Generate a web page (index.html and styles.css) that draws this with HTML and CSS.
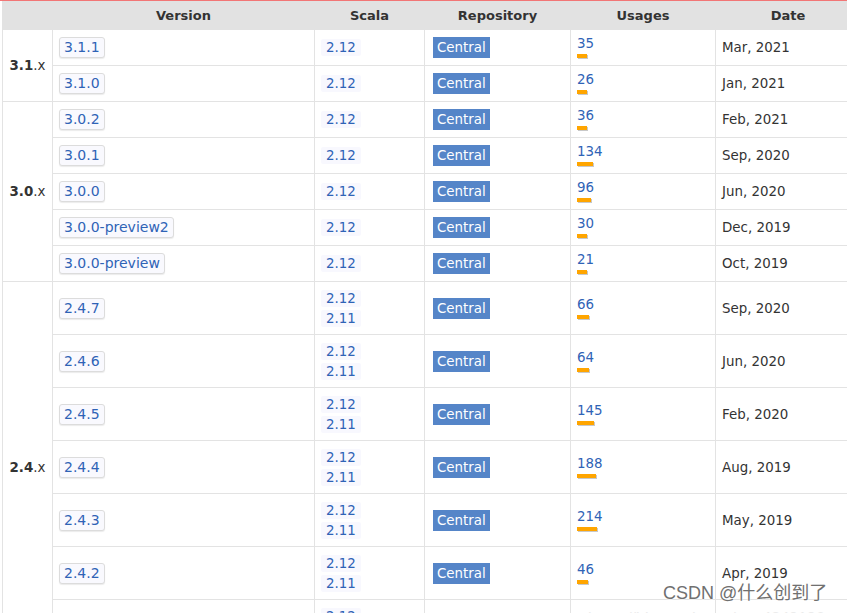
FILE: index.html
```html
<!DOCTYPE html>
<html>
<head>
<meta charset="utf-8">
<link rel="stylesheet" href="styles.css">
</head>
<body>
<div class="topline"></div>
<table class="grid">
  <colgroup>
    <col class="c-group"><col class="c-ver"><col class="c-scala"><col class="c-repo"><col class="c-use"><col class="c-date">
  </colgroup>
  <thead>
    <tr><th></th><th>Version</th><th>Scala</th><th>Repository</th><th>Usages</th><th>Date</th></tr>
  </thead>
  <tbody>
    <tr class="r1">
      <td class="grp" rowspan="2"><b>3.1</b>.x</td>
      <td><span class="ver">3.1.1</span></td>
      <td><span class="sc">2.12</span></td>
      <td class="repo"><span class="central">Central</span></td>
      <td><div class="use"><span class="num">35</span><span class="bar" style="width:10px"></span></div></td>
      <td class="date">Mar, 2021</td>
    </tr>
    <tr class="r1">
      <td><span class="ver">3.1.0</span></td>
      <td><span class="sc">2.12</span></td>
      <td class="repo"><span class="central">Central</span></td>
      <td><div class="use"><span class="num">26</span><span class="bar" style="width:10px"></span></div></td>
      <td class="date">Jan, 2021</td>
    </tr>
    <tr class="r1">
      <td class="grp" rowspan="5"><b>3.0</b>.x</td>
      <td><span class="ver">3.0.2</span></td>
      <td><span class="sc">2.12</span></td>
      <td class="repo"><span class="central">Central</span></td>
      <td><div class="use"><span class="num">36</span><span class="bar" style="width:10px"></span></div></td>
      <td class="date">Feb, 2021</td>
    </tr>
    <tr class="r1">
      <td><span class="ver">3.0.1</span></td>
      <td><span class="sc">2.12</span></td>
      <td class="repo"><span class="central">Central</span></td>
      <td><div class="use"><span class="num">134</span><span class="bar" style="width:16px"></span></div></td>
      <td class="date">Sep, 2020</td>
    </tr>
    <tr class="r1">
      <td><span class="ver">3.0.0</span></td>
      <td><span class="sc">2.12</span></td>
      <td class="repo"><span class="central">Central</span></td>
      <td><div class="use"><span class="num">96</span><span class="bar" style="width:14px"></span></div></td>
      <td class="date">Jun, 2020</td>
    </tr>
    <tr class="r1">
      <td><span class="ver">3.0.0-preview2</span></td>
      <td><span class="sc">2.12</span></td>
      <td class="repo"><span class="central">Central</span></td>
      <td><div class="use"><span class="num">30</span><span class="bar" style="width:10px"></span></div></td>
      <td class="date">Dec, 2019</td>
    </tr>
    <tr class="r1">
      <td><span class="ver">3.0.0-preview</span></td>
      <td><span class="sc">2.12</span></td>
      <td class="repo"><span class="central">Central</span></td>
      <td><div class="use"><span class="num">21</span><span class="bar" style="width:10px"></span></div></td>
      <td class="date">Oct, 2019</td>
    </tr>
    <tr class="r2">
      <td class="grp" rowspan="7"><b>2.4</b>.x</td>
      <td><span class="ver">2.4.7</span></td>
      <td><span class="sc">2.12</span><span class="sc">2.11</span></td>
      <td class="repo"><span class="central">Central</span></td>
      <td><div class="use"><span class="num">66</span><span class="bar" style="width:12px"></span></div></td>
      <td class="date">Sep, 2020</td>
    </tr>
    <tr class="r2">
      <td><span class="ver">2.4.6</span></td>
      <td><span class="sc">2.12</span><span class="sc">2.11</span></td>
      <td class="repo"><span class="central">Central</span></td>
      <td><div class="use"><span class="num">64</span><span class="bar" style="width:12px"></span></div></td>
      <td class="date">Jun, 2020</td>
    </tr>
    <tr class="r2">
      <td><span class="ver">2.4.5</span></td>
      <td><span class="sc">2.12</span><span class="sc">2.11</span></td>
      <td class="repo"><span class="central">Central</span></td>
      <td><div class="use"><span class="num">145</span><span class="bar" style="width:17px"></span></div></td>
      <td class="date">Feb, 2020</td>
    </tr>
    <tr class="r2">
      <td><span class="ver">2.4.4</span></td>
      <td><span class="sc">2.12</span><span class="sc">2.11</span></td>
      <td class="repo"><span class="central">Central</span></td>
      <td><div class="use"><span class="num">188</span><span class="bar" style="width:19px"></span></div></td>
      <td class="date">Aug, 2019</td>
    </tr>
    <tr class="r2">
      <td><span class="ver">2.4.3</span></td>
      <td><span class="sc">2.12</span><span class="sc">2.11</span></td>
      <td class="repo"><span class="central">Central</span></td>
      <td><div class="use"><span class="num">214</span><span class="bar" style="width:20px"></span></div></td>
      <td class="date">May, 2019</td>
    </tr>
    <tr class="r2">
      <td><span class="ver">2.4.2</span></td>
      <td><span class="sc">2.12</span><span class="sc">2.11</span></td>
      <td class="repo"><span class="central">Central</span></td>
      <td><div class="use"><span class="num">46</span><span class="bar" style="width:11px"></span></div></td>
      <td class="date">Apr, 2019</td>
    </tr>
    <tr class="r2">
      <td><span class="ver">2.4.1</span></td>
      <td><span class="sc">2.12</span><span class="sc">2.11</span></td>
      <td class="repo"><span class="central">Central</span></td>
      <td><div class="use"><span class="num">40</span><span class="bar" style="width:11px"></span></div></td>
      <td class="date">Mar, 2019</td>
    </tr>
  </tbody>
</table>
<div class="watermark">CSDN @什么创到了<span class="wm-url">https://blog.csdn.net/qq_4349196</span></div>
</body>
</html>
```
FILE: styles.css
```css
html, body {
  margin: 0;
  padding: 0;
  overflow: hidden;
  background: #fff;
}
body {
  width: 847px;
  height: 613px;
  position: relative;
  font-family: "DejaVu Sans", Verdana, sans-serif;
  font-size: 13.4px;
  color: #333;
}
.topline {
  height: 1px;
  background: #f27676;
}
.grid {
  border-collapse: collapse;
  table-layout: fixed;
  width: 858px;
  margin-left: 2px;
}
.c-group { width: 50px; }
.c-ver { width: 262px; }
.c-scala { width: 110px; }
.c-repo { width: 146px; }
.c-use { width: 145px; }
.c-date { width: 145px; }

.grid th {
  background: #e2e2e2;
  font-weight: bold;
  font-size: 13px;
  color: #333;
  height: 27px;
  padding: 0;
  text-align: center;
  vertical-align: middle;
  border: 1px solid #e2e2e2;
}
.grid td {
  border: 1px solid #e3e3e3;
  padding: 0 6px;
  vertical-align: middle;
  text-align: left;
}
.r1 td { height: 35px; }
.r2 td { height: 52px; }

.grid td.grp {
  text-align: center;
  padding: 0;
  color: #333;
}
.grp b { font-weight: bold; }

.ver {
  display: inline-block;
  padding: 1px 4px;
  font-size: 14px;
  line-height: 17px;
  border: 1px solid #dcdcdc;
  border-radius: 3px;
  background: #f9f9fe;
  box-shadow: 0 1px 1px rgba(0,0,0,0.08);
  color: #2f63b6;
}
.sc {
  display: block;
  width: max-content;
  padding: 0 5px;
  margin: 3px 0;
  line-height: 17px;
  background: #f8f8fe;
  border-radius: 2px;
  color: #2f63b6;
}
.grid td.repo { padding-left: 8px; }
.central {
  display: inline-block;
  background: #5585c8;
  color: #fff;
  padding: 0 4px;
  line-height: 21px;
}
.use {
  display: flex;
  flex-direction: column;
  align-items: flex-start;
  margin-top: -1px;
}
.num {
  color: #2f63b6;
  line-height: 15px;
}
.bar {
  display: block;
  height: 4px;
  margin-top: 3px;
  background: #ffa500;
  box-shadow: 1px 1px 0 #c8c8c8;
}
.date { color: #333; }

.watermark {
  position: absolute;
  left: 663px;
  top: 582px;
  font-family: "Liberation Sans", "Noto Sans CJK SC", sans-serif;
  font-size: 18px;
  line-height: 22px;
  color: #707070;
  text-shadow: 0 0 2px #fff, 0 0 2px #fff;
  white-space: nowrap;
}
.wm-url {
  position: absolute;
  left: -75px;
  top: 26px;
  font-size: 16px;
  color: #ececec;
  text-shadow: none;
}
```
